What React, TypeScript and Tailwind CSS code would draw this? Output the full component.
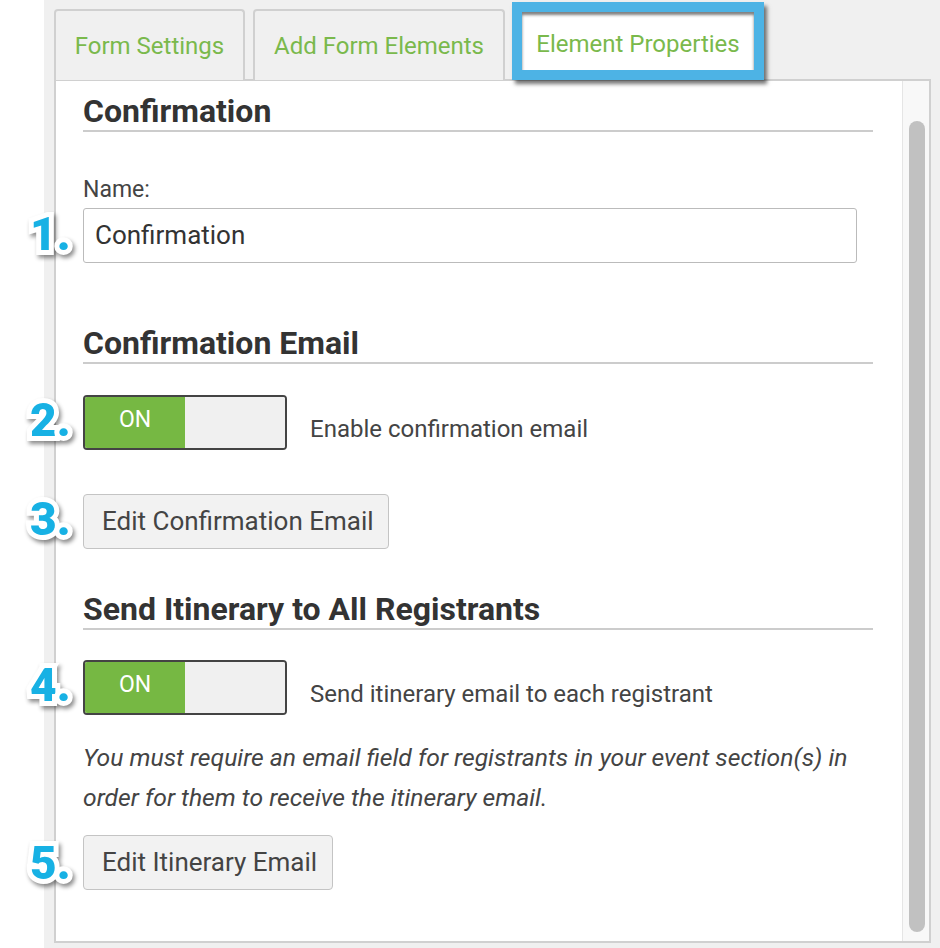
import React from "react";

const Badge = ({ n, top }: { n: number; top: number }) => (
  <div
    className="absolute left-[30px] text-[46px] font-black leading-none text-[#17b1e4] [paint-order:stroke_fill] [-webkit-text-stroke:10px_white] drop-shadow-[2px_3px_2px_rgba(0,0,0,0.45)]"
    style={{ top, fontFamily: "Roboto, 'Liberation Sans', sans-serif" }}
  >
    {n}.
  </div>
);

const Heading = ({ children, mt }: { children: React.ReactNode; mt: string }) => (
  <div className={`${mt} border-b-2 border-[#cccccc] pb-[1px]`}>
    <div className="text-[32px] font-bold leading-[36px] text-[#333333]">{children}</div>
  </div>
);

const Toggle = () => (
  <div className="flex h-[55px] w-[204px] overflow-hidden rounded-[4px] border-2 border-[#444444]">
    <div className="flex w-[100px] items-center justify-center bg-[#76b843] pb-[4px] text-[23px] text-white">ON</div>
    <div className="flex-1 bg-[#f0f0f0]" />
  </div>
);

export default function App() {
  return (
    <div
      className="relative flex h-[948px] w-[940px] overflow-hidden bg-white"
      style={{ fontFamily: "Roboto, 'Liberation Sans', sans-serif" }}
    >
      <div className="w-[44px] shrink-0 bg-white" />
      <div className="flex flex-1 flex-col bg-[#f0f0f0] pl-[10px] pr-[9px] pt-[2px] pb-[5px]">
        {/* Tabs */}
        <div className="relative z-10 flex h-[78px] items-end">
          <div className="flex h-[71px] w-[191px] items-center justify-center rounded-t-[4px] border-2 border-b-0 border-[#d0d0d0] bg-[#f0f0f0] text-[24px] text-[#7ab94c]">
            Form Settings
          </div>
          <div className="ml-[8px] flex h-[71px] w-[252px] items-center justify-center rounded-t-[4px] border-2 border-b-0 border-[#d0d0d0] bg-[#f0f0f0] text-[24px] text-[#7ab94c]">
            Add Form Elements
          </div>
          <div className="ml-[7px] flex h-[78px] w-[252px] items-center justify-center border-[10px] border-[#4db3e5] bg-white text-[24px] text-[#7ab94c] shadow-[3px_4px_4px_rgba(0,0,0,0.55),inset_0_3px_3px_rgba(0,0,0,0.5)]">
            <span className="pt-[5px]">Element Properties</span>
          </div>
        </div>
        {/* Panel */}
        <div className="-mt-px flex flex-1 border-2 border-[#d0d0d0] bg-white">
          <div className="flex flex-1 flex-col pl-[27px] pr-[29px]">
            <Heading mt="mt-[12px]">Confirmation</Heading>
            <div className="mt-[43px] text-[23px] leading-[30px] text-[#444444]">Name:</div>
            <div className="mt-[3px] flex h-[55px] w-[774px] items-center rounded-[3px] border border-[#bbbbbb] px-[11px] text-[26px] text-[#333333]">
              Confirmation
            </div>

            <Heading mt="mt-[62px]">Confirmation Email</Heading>
            <div className="mt-[31px] flex items-center gap-[23px]">
              <Toggle />
              <div className="pt-[12px] text-[24px] leading-[30px] text-[#444444]">Enable confirmation email</div>
            </div>
            <div className="mt-[44px] flex h-[55px] w-[306px] items-center whitespace-nowrap rounded-[4px] border border-[#c4c4c4] bg-[#f2f2f2] pl-[18px] text-[26px] text-[#444444]">
              Edit Confirmation Email
            </div>

            <Heading mt="mt-[42px]">Send Itinerary to All Registrants</Heading>
            <div className="mt-[30px] flex items-center gap-[23px]">
              <Toggle />
              <div className="pt-[12px] text-[24px] leading-[30px] text-[#444444]">Send itinerary email to each registrant</div>
            </div>
            <div className="mt-[23px] text-[24.7px] italic leading-[40px] text-[#444444]">
              You must require an email field for registrants in your event section(s) in order for them to receive the itinerary email.
            </div>
            <div className="mt-[17px] flex h-[55px] w-[250px] items-center whitespace-nowrap rounded-[4px] border border-[#c4c4c4] bg-[#f2f2f2] pl-[18px] text-[26px] text-[#444444]">
              Edit Itinerary Email
            </div>
          </div>
          {/* Scrollbar */}
          <div className="flex w-[27px] flex-col border-l border-[#e5e5e5] bg-[#f8f8f8] pl-[6px] pr-[4px] pt-[40px] pb-[9px]">
            <div className="flex-1 rounded-full bg-[#c1c1c1]" />
          </div>
        </div>
      </div>
      <Badge n={1} top={211} />
      <Badge n={2} top={397} />
      <Badge n={3} top={496} />
      <Badge n={4} top={662} />
      <Badge n={5} top={840} />
    </div>
  );
}
